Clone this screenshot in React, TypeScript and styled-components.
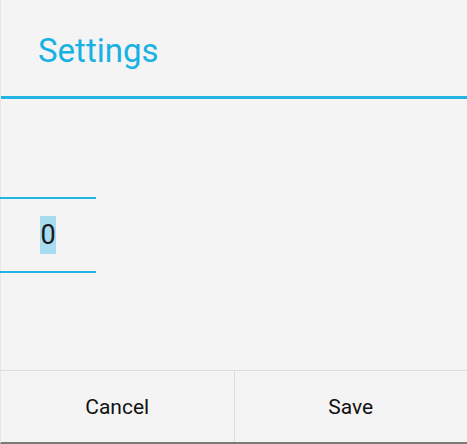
import React from 'react';
import styled, { createGlobalStyle } from 'styled-components';

const HOLO_BLUE = '#22b4e2';
const BG = '#f4f4f4';

const Global = createGlobalStyle`
  html, body {
    margin: 0;
    padding: 0;
    background: ${BG};
  }
  * {
    box-sizing: border-box;
  }
`;

function App() {
  return (
    <>
      <Global />
      <Dialog>
        <Header>
          <Title>Settings</Title>
        </Header>
        <Body>
          <Picker>
            <Value>
              <Selected>0</Selected>
            </Value>
          </Picker>
        </Body>
        <Footer>
          <ActionButton>Cancel</ActionButton>
          <ActionButton divider>Save</ActionButton>
        </Footer>
      </Dialog>
    </>
  );
}

const Dialog = styled.div`
  width: 467px;
  height: 444px;
  display: flex;
  flex-direction: column;
  background: ${BG};
  border-left: 1px solid #e6e6e6;
  border-bottom: 2px solid #7a7a7a;
  font-family: Roboto, "Liberation Sans", sans-serif;
`;

const Header = styled.div`
  height: 99px;
  flex-shrink: 0;
  display: flex;
  align-items: center;
  padding: 5px 0 0 37px;
  border-bottom: 3px solid ${HOLO_BLUE};
`;

const Title = styled.div`
  color: #18b1e3;
  font-size: 33px;
  line-height: 1;
`;

const Body = styled.div`
  flex: 1;
  display: flex;
  align-items: center;
`;

const Picker = styled.div`
  width: 96px;
  margin-left: -1px;
  border-top: 2px solid ${HOLO_BLUE};
  border-bottom: 2px solid ${HOLO_BLUE};
  height: 76px;
  display: flex;
  align-items: center;
  justify-content: center;
`;

const Value = styled.div`
  font-size: 27px;
  color: #1a1a1a;
`;

const Selected = styled.span`
  display: inline-block;
  background: #a8dcf1;
  line-height: 38px;
`;

const Footer = styled.div`
  height: 72px;
  flex-shrink: 0;
  display: flex;
  border-top: 1px solid #dcdcdc;
`;

const ActionButton = styled.div<{ divider?: boolean }>`
  flex: 1;
  display: flex;
  align-items: center;
  justify-content: center;
  font-size: 21px;
  color: #111;
  border-left: ${p => (p.divider ? '1px solid #dcdcdc' : 'none')};
`;

export default App;
